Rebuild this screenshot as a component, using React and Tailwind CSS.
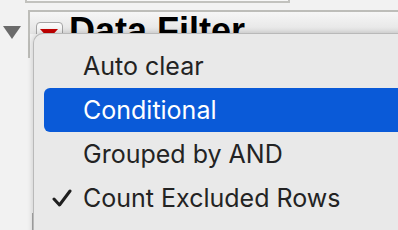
import React from "react";

const items = [
  { label: "Auto clear" },
  { label: "Conditional", active: true },
  { label: "Grouped by AND" },
  { label: "Count Excluded Rows", checked: true },
];

function Check() {
  return (
    <svg width="20" height="18" viewBox="0 0 20 18" className="text-[#1f1f1f]">
      <path d="M2 10 L7.5 16 L18 2" fill="none" stroke="currentColor" strokeWidth="3" strokeLinecap="round" strokeLinejoin="round" />
    </svg>
  );
}

export default function App() {
  return (
    <div className="relative w-[398px] h-[230px] overflow-hidden bg-[#f2f2f2] font-['Inter',sans-serif]">
      {/* window above */}
      <div className="ml-[25px] w-[265px] h-[3px] border-x-2 border-b-2 border-[#c2c2be] bg-[#f7f7f7]" />

      <div className="flex mt-[7px]">
        <div className="w-[28px] shrink-0 pl-[3px] pt-[16px]">
          <svg width="18" height="13" viewBox="0 0 18 13">
            <path d="M0 0 H18 L9 13 Z" fill="#6b6b6b" />
          </svg>
        </div>

        <div className="flex-1 h-[48px] border-t-2 border-l-2 border-[#bdbdb9]">
          <div className="flex h-[22px] bg-gradient-to-b from-[#f6f6f6] to-[#e3e3e3] overflow-hidden">
            <div className="ml-[6px] mt-[10px] w-[27px] h-[20px] rounded-[4px] border border-[#a4a4a4] bg-gradient-to-b from-[#fbfbfb] to-[#e6e6e6] shrink-0 pl-[3px] pt-[6px]">
              <svg width="18" height="10" viewBox="0 0 18 10">
                <path d="M0 0 H18 L9 10 Z" fill="#c40000" />
              </svg>
            </div>
            <div className="ml-[6px] mt-px text-[36px] leading-[36px] font-bold text-black font-['Liberation_Sans',sans-serif] whitespace-nowrap">
              Data Filter
            </div>
          </div>
        </div>
      </div>

      {/* part of the window under the menu */}
      <div className="absolute left-[32px] top-[213px] w-px h-[20px] bg-[#a8a8a8]" />

      {/* popup menu */}
      <div className="absolute left-[33px] top-[33px] w-[400px] h-[220px] rounded-tl-[10px] border-t border-l border-[#b9b9b9] bg-[#e9e9e9] shadow-[0_0_6px_rgba(0,0,0,0.18)] pt-[10px] px-[10px]">
        {items.map((it) => (
          <div
            key={it.label}
            className={
              it.active
                ? "flex items-center h-[44px] rounded-[6px] bg-[#0a5ad8] text-white"
                : "flex items-center h-[44px] text-[#232323]"
            }
          >
            <div className="w-[39px] shrink-0 pl-[8px] flex items-center">
              {it.checked && <Check />}
            </div>
            <span className="text-[25px] leading-none whitespace-nowrap">
              {it.label}
            </span>
          </div>
        ))}
      </div>
    </div>
  );
}
